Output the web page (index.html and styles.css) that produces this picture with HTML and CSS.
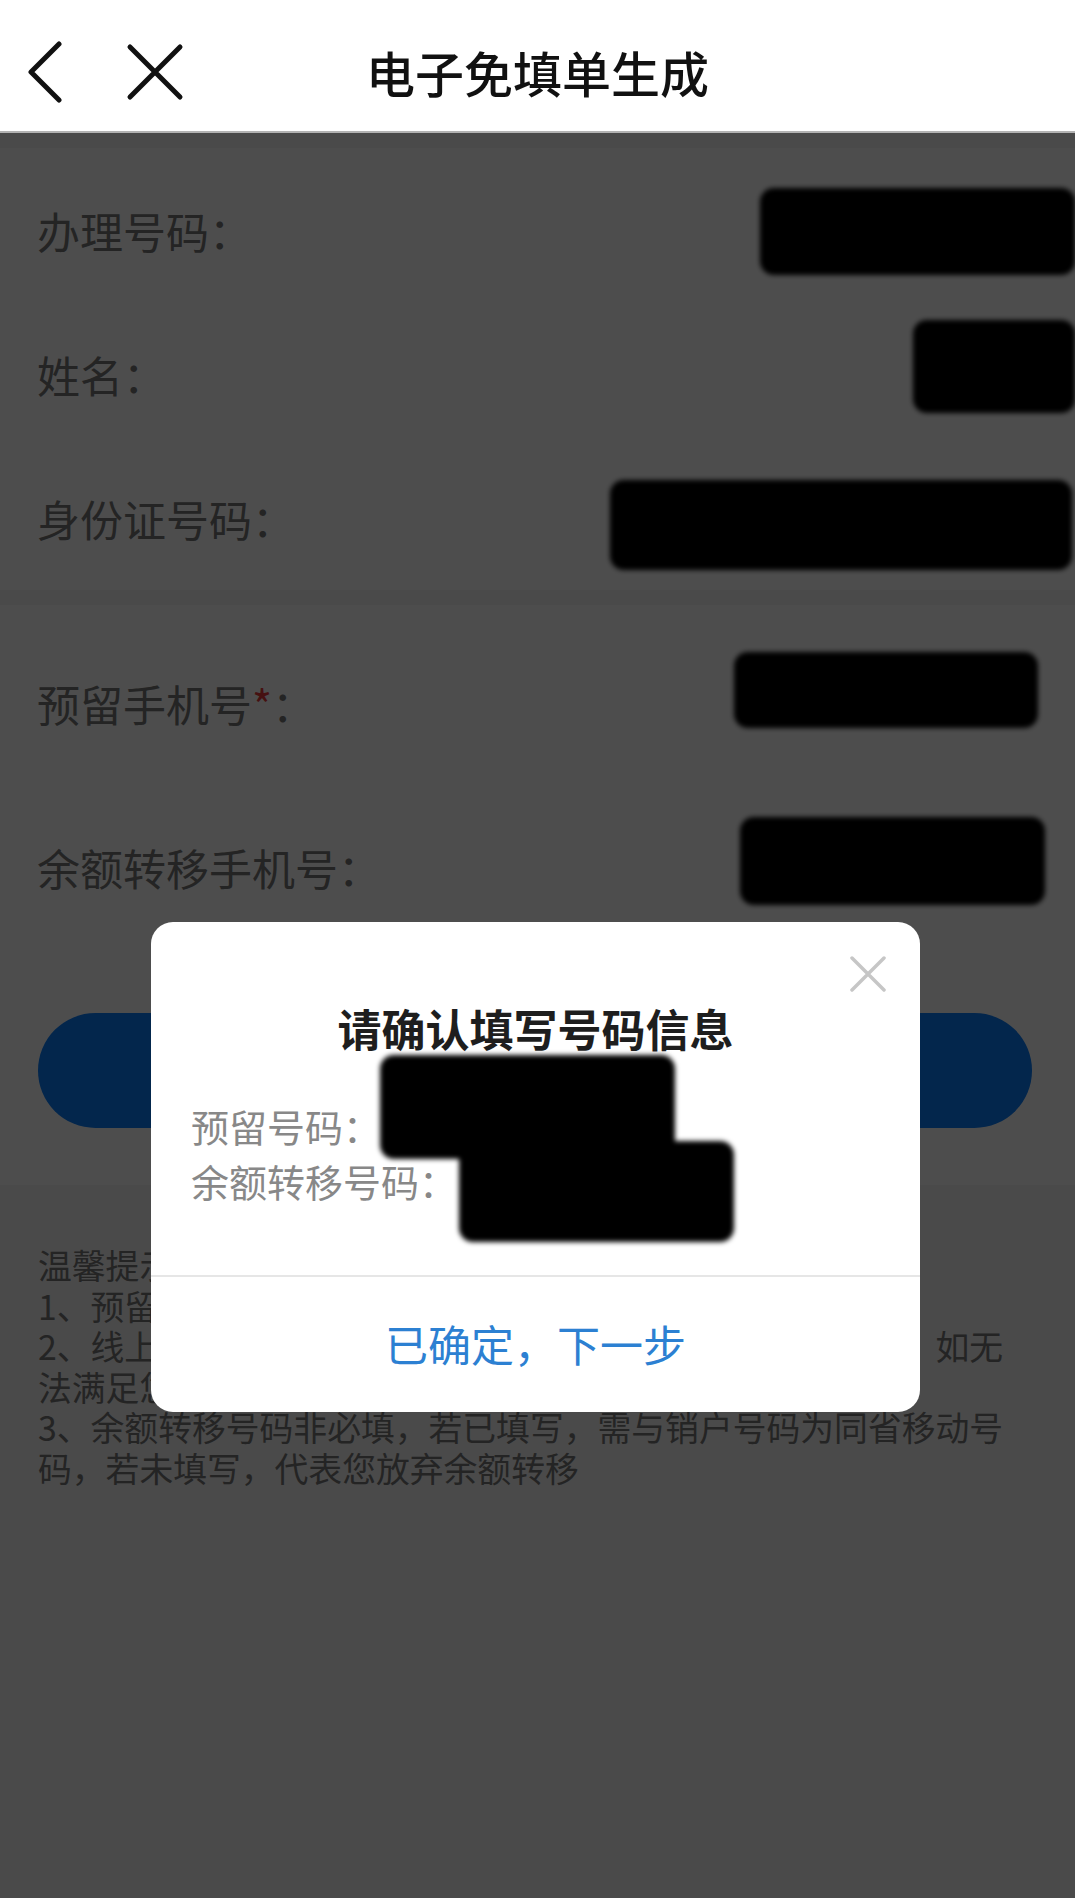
FILE: index.html
```html
<!DOCTYPE html>
<html lang="zh-CN">
<head>
<meta charset="utf-8">
<title>电子免填单生成</title>
<link rel="stylesheet" href="styles.css">
</head>
<body>
<header class="topbar">
  <div class="nav">
    <svg class="ico-back" width="34" height="62" viewBox="0 0 34 62"><path d="M31 3 L3 31 L31 59"/></svg>
    <svg class="ico-close" width="58" height="58" viewBox="0 0 58 58"><path d="M4 4 L54 54 M54 4 L4 54"/></svg>
  </div>
  <h1 class="title">电子免填单生成</h1>
  <div class="nav-right"></div>
</header>

<main class="page">
  <section class="card card-top">
    <div class="row"><span class="label">办理号码：</span><span class="redact r1"></span></div>
    <div class="row"><span class="label">姓名：</span><span class="redact r2"></span></div>
    <div class="row"><span class="label">身份证号码：</span><span class="redact r3"></span></div>
  </section>
  <section class="card card-mid">
    <div class="row row-tall"><span class="label">预留手机号<em class="req">*</em>：</span><span class="redact r4"></span></div>
    <div class="row row-tall"><span class="label">余额转移手机号：</span><span class="redact r5"></span></div>
    <button class="btn-next">下一步</button>
  </section>
  <section class="tips">
    <p>温馨提示：</p>
    <p>1、预留手机号码用于接收销户结果通知</p>
    <p>2、线上销户需满足号码状态正常、无欠费、无业务限制等，如无法满足您的销户条件，请前往营业厅办理。</p>
    <p>3、余额转移号码非必填，若已填写，需与销户号码为同省移动号码，若未填写，代表您放弃余额转移</p>
  </section>
</main>

<div class="mask"></div>

<div class="dialog">
  <svg class="dlg-close" width="36" height="36" viewBox="0 0 36 36"><path d="M2 2 L34 34 M34 2 L2 34"/></svg>
  <div class="dlg-body">
    <h2 class="dlg-title">请确认填写号码信息</h2>
    <p class="dlg-line">预留号码：</p>
    <p class="dlg-line">余额转移号码：</p>
  </div>
  <div class="dlg-btn">已确定，下一步</div>
  <span class="redact dr1"></span>
  <span class="redact dr2"></span>
</div>
</body>
</html>
```

FILE: styles.css
```css
* { box-sizing: border-box; }

html, body {
  margin: 0;
  padding: 0;
}

body {
  width: 1075px;
  min-height: 1898px;
  background: #f4f4f4;
  font-family: "Noto Sans CJK SC", "Noto Sans", sans-serif;
  color: #777;
  position: relative;
}

/* header */
.topbar {
  height: 133px;
  padding-top: 13px;
  background: #fff;
  border-bottom: 2px solid #b3b3b3;
  display: grid;
  grid-template-columns: 1fr auto 1fr;
  align-items: center;
}

.nav {
  display: flex;
  align-items: center;
  padding-left: 28px;
  gap: 64px;
}

.nav svg path {
  fill: none;
  stroke: #111;
  stroke-width: 5;
  stroke-linecap: round;
  stroke-linejoin: round;
}

.title {
  margin: 0;
  font-size: 49px;
  font-weight: 500;
  color: #111;
  line-height: 60px;
  letter-spacing: 0;
}

/* page */
.page {
  padding-top: 15px;
}

.card {
  background: #fff;
}

.card-top {
  padding-top: 10px;
}

.card-mid {
  margin-top: 15px;
  padding-top: 16px;
  padding-bottom: 57px;
}

.row {
  height: 144px;
  display: flex;
  align-items: center;
  padding-left: 37px;
  font-size: 43px;
}

.row-tall {
  height: 164px;
}

.label {
  color: #777;
  white-space: nowrap;
}

.req {
  font-style: normal;
  color: #e63b3b;
}

.redact {
  display: block;
  background: #000;
  border-radius: 14px;
  filter: blur(2.5px);
}

.r1 { margin-left: auto; width: 315px; height: 87px; margin-top: 2px; }
.r2 { margin-left: auto; width: 162px; height: 93px; margin-bottom: 15px; }
.r3 { margin-left: auto; width: 462px; height: 90px; margin-right: 3px; margin-top: 14px; }
.r4 { margin-left: auto; width: 304px; height: 76px; margin-right: 37px; margin-bottom: 26px; }
.r5 { margin-left: auto; width: 305px; height: 88px; margin-right: 30px; margin-bottom: 12px; }

.btn-next {
  display: block;
  width: 994px;
  height: 115px;
  margin: 64px 0 0 38px;
  border: 0;
  border-radius: 58px;
  background: #0a7dfa;
  color: #fff;
  font-family: inherit;
  font-size: 42px;
}

.tips {
  padding: 60px 60px 0 38px;
  font-size: 33.8px;
  line-height: 40.6px;
  color: #777;
}

.tips p {
  margin: 0;
}

/* mask */
.mask {
  position: absolute;
  top: 133px;
  left: 0;
  right: 0;
  bottom: 0;
  background: rgba(0, 0, 0, 0.698);
}

/* dialog */
.dialog {
  position: absolute;
  top: 922px;
  left: 151px;
  width: 769px;
  background: #fff;
  border-radius: 22px;
  overflow: hidden;
}

.dlg-close {
  position: absolute;
  top: 34px;
  right: 34px;
}

.dlg-close path {
  fill: none;
  stroke: #c6c6c6;
  stroke-width: 3.5;
  stroke-linecap: round;
}

.dlg-body {
  padding: 76px 40px 67px;
  border-bottom: 2px solid #e6e6e6;
}

.dlg-title {
  margin: 0 0 40px;
  text-align: center;
  font-size: 44px;
  line-height: 60px;
  font-weight: 700;
  color: #1e1e1e;
}

.dlg-line {
  margin: 0;
  font-size: 38px;
  line-height: 55px;
  color: #888;
}

.dlg-btn {
  height: 135px;
  line-height: 133px;
  text-align: center;
  font-size: 43px;
  color: #2c80d2;
}

.dialog .redact {
  position: absolute;
}

.dr1 { left: 229px; top: 133px; width: 295px; height: 104px; }
.dr2 { left: 308px; top: 219px; width: 275px; height: 101px; }
```
